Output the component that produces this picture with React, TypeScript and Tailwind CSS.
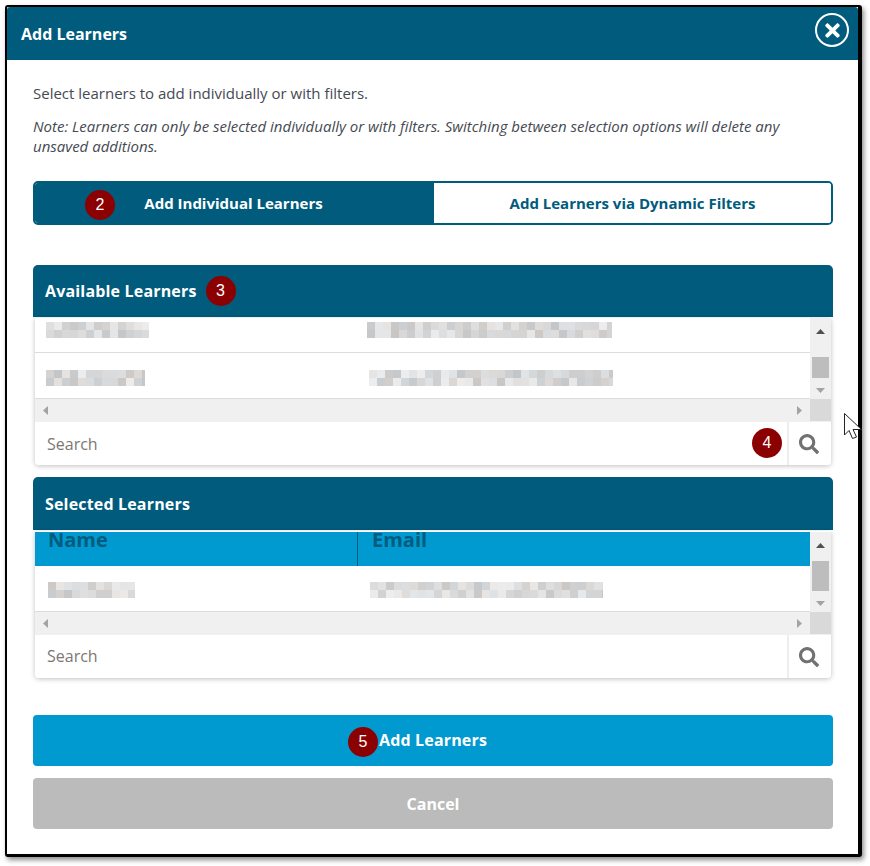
import React from "react";
import { FaSearch, FaTimes } from "react-icons/fa";

const sans = "font-['Open_Sans',sans-serif]";

function Badge({ n, className = "" }: { n: number; className?: string }) {
  return (
    <span className={`flex h-[30px] w-[30px] items-center justify-center rounded-full bg-[#8b0000] font-['Liberation_Sans',sans-serif] text-[16px] font-normal tracking-normal text-white ${className}`}>
      {n}
    </span>
  );
}

function Pixels({ width, seed, rows = 2 }: { width: number; seed: number; rows?: number }) {
  const cols = Math.ceil(width / 8);
  const cells: string[] = [];
  let s = seed;
  for (let i = 0; i < cols * rows; i++) {
    s = (s * 9301 + 49297) % 233280;
    const v = 198 + Math.floor((s / 233280) * 40);
    const t = (s % 7) - 3;
    cells.push(`rgb(${v + t},${v},${v - t})`);
  }
  return (
    <div className="grid overflow-hidden" style={{ width, gridTemplateColumns: `repeat(${cols}, 8px)`, gridAutoRows: "8px" }}>
      {cells.map((c, i) => (
        <div key={i} style={{ background: c }} />
      ))}
    </div>
  );
}

function Tri({ dir, color }: { dir: "up" | "down" | "left" | "right"; color: string }) {
  const points = {
    up: "0,5 9,5 4.5,0",
    down: "0,0 9,0 4.5,5",
    left: "5,0 5,9 0,4.5",
    right: "0,0 0,9 5,4.5",
  }[dir];
  const vertical = dir === "up" || dir === "down";
  return (
    <svg width={vertical ? 9 : 5} height={vertical ? 5 : 9} viewBox={vertical ? "0 0 9 5" : "0 0 5 9"}>
      <polygon points={points} fill={color} />
    </svg>
  );
}

function Row({ h, nameW, emailW, nameX, emailX, seed, top }: { h: number; nameW: number; emailW: number; nameX: number; emailX: number; seed: number; top: number }) {
  return (
    <div className="flex border-b border-[#dcdcdc] bg-white" style={{ height: h, paddingTop: top }}>
      <div style={{ marginLeft: nameX }}>
        <Pixels width={nameW} seed={seed} />
      </div>
      <div style={{ marginLeft: emailX - nameX - nameW }}>
        <Pixels width={emailW} seed={seed + 37} />
      </div>
    </div>
  );
}

function ScrollArea({ children, thumbTop, thumbH, height }: { children: React.ReactNode; thumbTop: number; thumbH: number; height: number }) {
  return (
    <div className="flex" style={{ height }}>
      <div className="min-w-0 flex-1">{children}</div>
      <div className="flex w-[21px] flex-col items-center bg-[#f0f0f0]">
        <div className="flex h-[26px] w-full items-center justify-center">
          <Tri dir="up" color="#505050" />
        </div>
        <div className="w-[17px] shrink-0 bg-[#bdbdbd]" style={{ height: thumbH, marginTop: thumbTop }} />
        <div className="mt-auto flex h-[18px] w-full items-center justify-center">
          <Tri dir="down" color="#a3a3a3" />
        </div>
      </div>
    </div>
  );
}

function HScroll() {
  return (
    <div className="flex h-[23px] bg-[#f0f0f0]">
      <div className="flex flex-1 items-center justify-between px-[8px]">
        <Tri dir="left" color="#a3a3a3" />
        <Tri dir="right" color="#a3a3a3" />
      </div>
      <div className="mb-[1px] w-[21px] bg-[#d9d9d9]" />
    </div>
  );
}

function SearchRow({ children, lift = false }: { children?: React.ReactNode; lift?: boolean }) {
  return (
    <div className="relative flex h-[43px] bg-white">
      <div className={`flex flex-1 items-center pl-[12px] text-[16px] text-[#7d7772] ${lift ? "pb-[2px]" : ""}`}>Search</div>
      {children}
      <div className="flex w-[44px] items-center justify-center border-l-2 border-[#eeeeee] pr-[2px] text-[#717171]">
        <FaSearch size={20} />
      </div>
    </div>
  );
}

function PanelHeader({ title, h, children }: { title: string; h: number; children?: React.ReactNode }) {
  return (
    <div className="flex items-center gap-[9px] rounded-t-[5px] bg-[#005b7c] pl-[12px] text-[16px] font-bold tracking-[0.17px] text-white" style={{ height: h }}>
      {title}
      {children}
    </div>
  );
}

function Card({ children }: { children: React.ReactNode }) {
  return (
    <div className="mx-[2px] mt-[1px] overflow-hidden rounded-b-[4px] bg-white shadow-[0_1px_5px_rgba(0,0,0,0.25)]">{children}</div>
  );
}

function Cursor() {
  return (
    <svg className="absolute left-[844px] top-[413px]" width="19" height="28" viewBox="0 0 19 28">
      <path d="M0.5 0.5 V22 L5 17.5 L8.5 25.5 L12.5 24 L9 16.5 H17.5 Z" fill="#ffffff" stroke="#222222" strokeWidth="1" />
    </svg>
  );
}

export default function App() {
  return (
    <div className={`relative h-[866px] w-[870px] overflow-hidden bg-white pl-[5px] pt-[5px] ${sans}`}>
      <div className="h-[852px] w-[857px] rounded-[3px] border-b-[3px] border-l-2 border-r-[4px] border-t-2 border-black bg-white shadow-[2px_3px_5px_rgba(0,0,0,0.45)]">
        <div className="flex h-[53px] items-center justify-between rounded-t-[3px] bg-[#005b7c] pl-[14px] pr-[9px]">
          <span className="text-[16px] font-bold text-white">Add Learners</span>
          <button className="mt-[-7px] flex h-[34px] w-[34px] items-center justify-center rounded-full border-2 border-white text-white">
            <FaTimes size={21} />
          </button>
        </div>

        <div className="pl-[26px] pr-[25px]">
          <p className="mt-[23px] text-[15px] leading-[20px] text-[#454a52]">Select learners to add individually or with filters.</p>
          <p className="mt-[13px] text-[15px] italic leading-[20px] text-[#454a52]">
            Note: Learners can only be selected individually or with filters. Switching between selection options will delete any unsaved additions.
          </p>

          <div className="mt-[25px] flex h-[44px] overflow-hidden rounded-[5px] border-2 border-[#005b7c] text-[15px] font-bold">
            <div className="relative flex w-[399px] items-center justify-center bg-[#005b7c] pr-[2px] text-white">
              Add Individual Learners
              <Badge n={2} className="absolute left-[50px] top-[7px]" />
            </div>
            <div className="flex flex-1 items-center justify-center bg-white text-[#005b7c]">Add Learners via Dynamic Filters</div>
          </div>

          <div className="mt-[40px]">
            <PanelHeader title="Available Learners" h={52}>
              <Badge n={3} />
            </PanelHeader>
            <Card>
              <ScrollArea height={81} thumbTop={13} thumbH={21}>
                <Row h={35} top={4} nameX={11} nameW={103} emailX={332} emailW={245} seed={11} />
                <Row h={46} top={17} nameX={11} nameW={99} emailX={334} emailW={244} seed={53} />
              </ScrollArea>
              <HScroll />
              <SearchRow>
                <Badge n={4} className="absolute left-[717px] top-[6px]" />
              </SearchRow>
            </Card>
          </div>

          <div className="mt-[12px]">
            <PanelHeader title="Selected Learners" h={53} />
            <Card>
              <div className="h-[1px]" />
              <ScrollArea height={80} thumbTop={3} thumbH={30}>
                <div className="flex h-[34px] bg-[#009ad0] text-[20px] font-bold leading-[15px] text-[#005b7c]">
                  <div className="w-[323px] border-r border-[#005b7c] pl-[13px]">Name</div>
                  <div className="pl-[14px]">Email</div>
                </div>
                <Row h={46} top={16} nameX={13} nameW={87} emailX={335} emailW={233} seed={97} />
              </ScrollArea>
              <HScroll />
              <SearchRow lift />
            </Card>
          </div>

          <button className="relative mt-[37px] flex h-[51px] w-full items-center justify-center rounded-[4px] bg-[#009ad0] pb-[2px] text-[16px] font-bold tracking-[0.17px] text-white">
            Add Learners
            <Badge n={5} className="absolute left-[315px] top-[12px]" />
          </button>
          <button className="mt-[12px] flex h-[51px] w-full items-center justify-center rounded-[4px] bg-[#babbba] text-[16px] font-bold text-white">
            Cancel
          </button>
        </div>
      </div>
      <Cursor />
    </div>
  );
}
